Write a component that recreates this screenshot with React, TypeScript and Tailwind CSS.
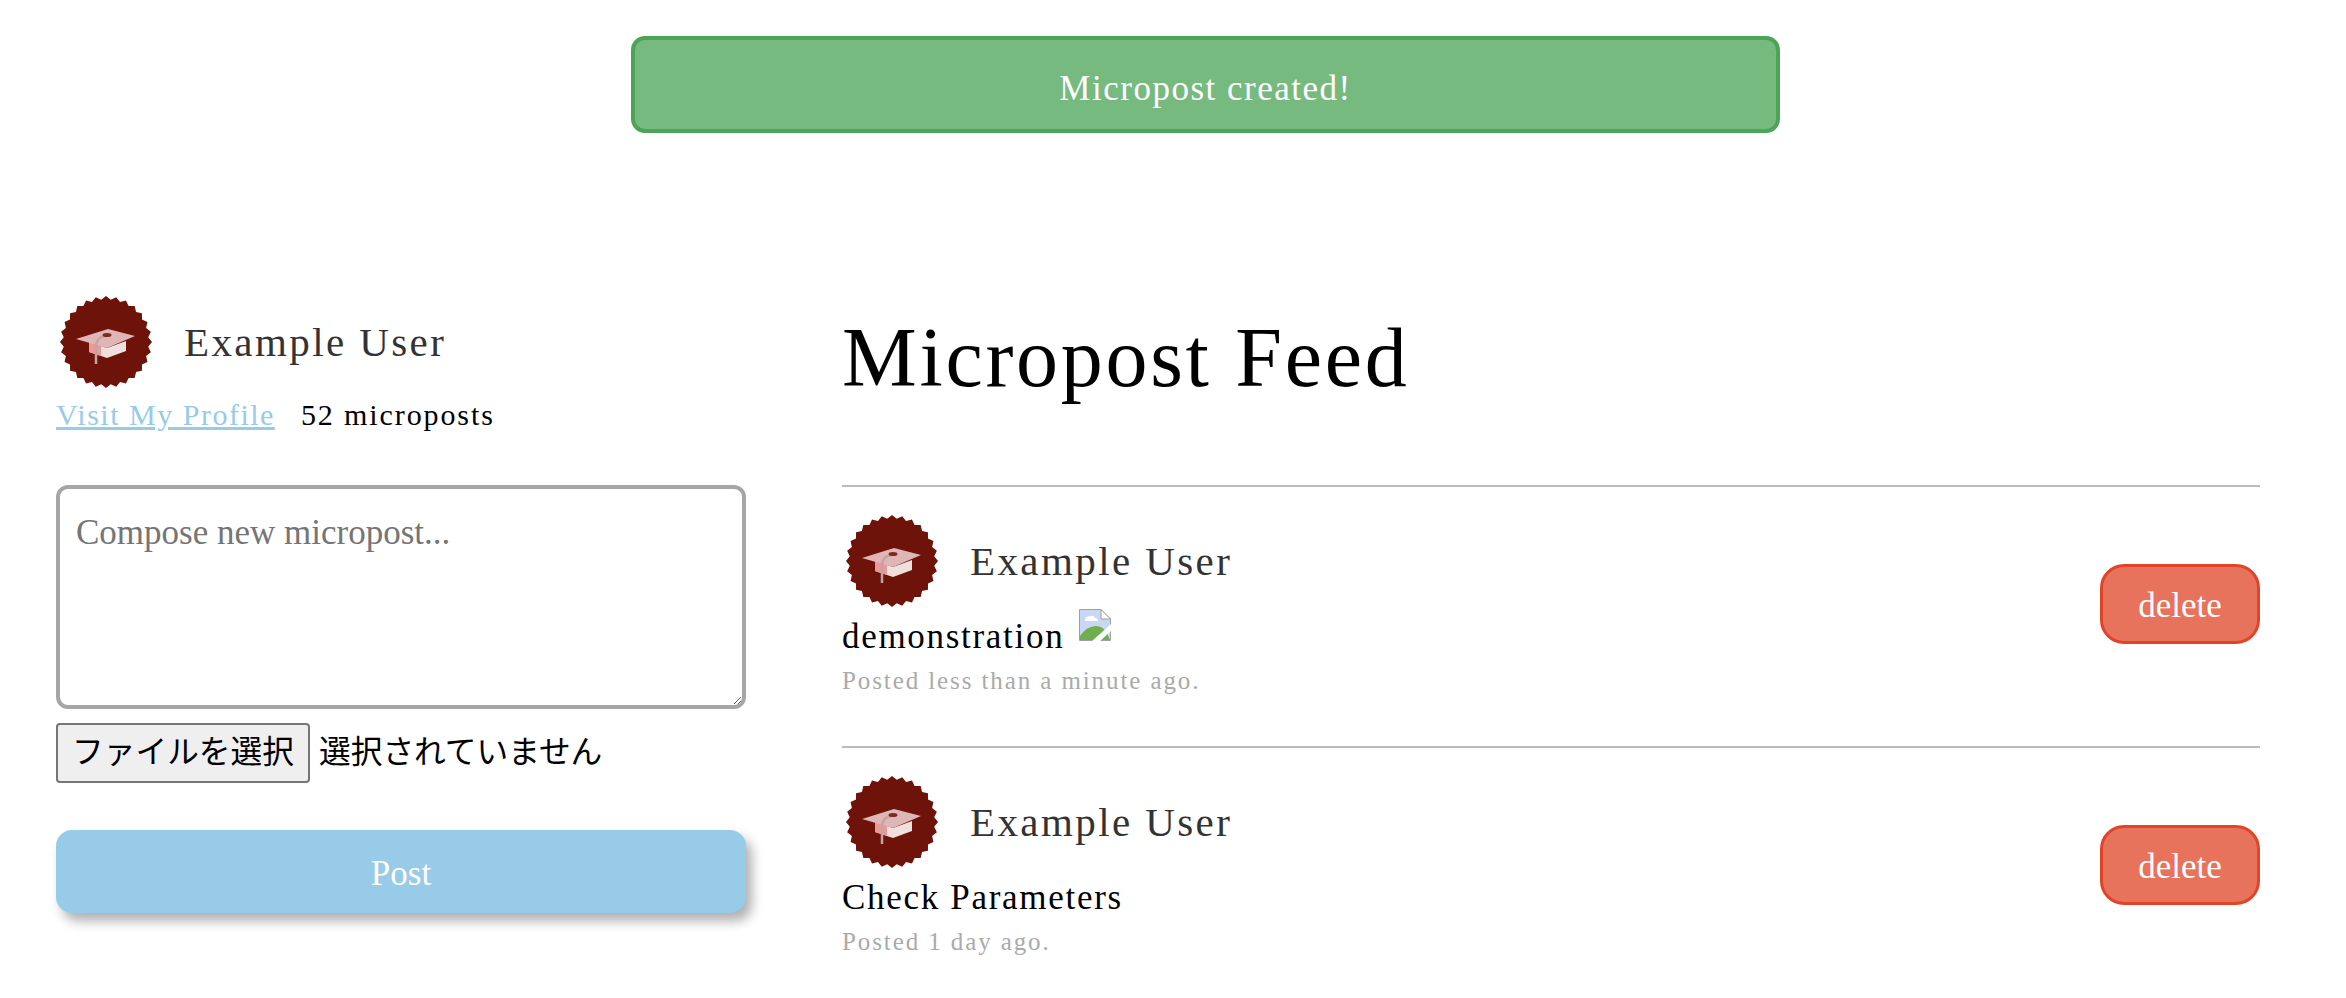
const serif = "font-['Liberation_Serif','Noto_Sans_CJK_JP',serif]"

function badgePoints() {
  const pts: string[] = []
  const count = 28
  for (let i = 0; i < count * 2; i++) {
    const r = i % 2 === 0 ? 46 : 42.5
    const a = (Math.PI * i) / count
    pts.push(`${(46 + r * Math.sin(a)).toFixed(2)},${(46 - r * Math.cos(a)).toFixed(2)}`)
  }
  return pts.join(' ')
}

function Avatar() {
  return (
    <svg width="92" height="92" viewBox="0 0 92 92" className="shrink-0 blur-[0.7px]">
      <polygon points={badgePoints()} fill="#6d1309" />
      <path d="M29 46 L29 56 L47 62 L66 55 L66 45 L47 52 Z" fill="#efe0de" />
      <path d="M29 46 L29 56 L41 60 L41 50 Z" fill="#e89a98" />
      <path d="M16 43 L48 33 L75 40 L47 52 Z" fill="#dfb6b6" />
      <path d="M46 40 C38 41 36 45 36 51 L36 68" fill="none" stroke="#c4a3a0" strokeWidth="2.5" />
      <ellipse cx="47" cy="39" rx="4.5" ry="2" fill="#7d2a20" />
    </svg>
  )
}

function BrokenImage() {
  return (
    <svg width="32" height="32" viewBox="0 0 32 32" className="inline-block align-top">
      <path d="M0.5 0.5 H22 L31.5 10 V31.5 H0.5 Z" fill="#c9d8f2" stroke="#a0a0a0" />
      <path d="M22 0.5 V10 H31.5 Z" fill="#fff" stroke="#a0a0a0" />
      <path d="M6 11 Q7 6.5 11 7.5 Q14 5.5 16 9 Q19 9 19 12 H6 Z" fill="#fff" />
      <path d="M1 31 V27 Q8 17 17 17 Q24 17 28 24 L31 31 Z" fill="#6fae4c" />
      <path d="M12 33 L33 14 V21 L20 33 Z" fill="#fff" />
    </svg>
  )
}

function UserLine() {
  return (
    <div className="flex items-center gap-[32px]">
      <Avatar />
      <span className="pt-[1px] text-[41px] leading-none tracking-[2.4px] text-[#333]">Example User</span>
    </div>
  )
}

function FeedItem({ body, ago, broken }: { body: string; ago: string; broken?: boolean }) {
  return (
    <li className="flex h-[261px] items-center justify-between border-t-2 border-[#bbb] pb-[26px]">
      <div className="pt-[3px]">
        <div className="ml-[4px]">
          <UserLine />
        </div>
        <p className="mt-[3px] flex h-[48px] items-end text-[35px] leading-none tracking-[1.7px] text-black">
          <span className="pb-[4px]">{body}</span>
          {broken && (
            <span className="mb-[14px] ml-[15px]">
              <BrokenImage />
            </span>
          )}
        </p>
        <p className="mt-[8px] text-[25px] leading-[30px] tracking-[1.9px] text-[#aaa]">{ago}</p>
      </div>
      <button className="h-[80px] w-[160px] rounded-[24px] border-[3px] border-[#e0452a] bg-[#e8735c] pt-[6px] text-[35px] text-white">
        delete
      </button>
    </li>
  )
}

export default function App() {
  return (
    <div className={`${serif} h-[998px] overflow-hidden bg-white`}>
      <div className="ml-[631px] mt-[36px] flex h-[97px] w-[1149px] items-center justify-center rounded-[14px] border-[4px] border-[#4ca456] bg-[#76ba80] pt-[10px] text-[35px] tracking-[1.5px] text-white">
        Micropost created!
      </div>

      <div className="mt-[163px] flex pl-[56px] pr-[86px]">
        <aside className="w-[690px] shrink-0">
          <div className="ml-[4px]">
            <UserLine />
          </div>
          <div className="mt-[8px] flex items-baseline gap-[26px] text-[30px] leading-[38px]">
            <a href="#" className="tracking-[1.5px] text-[#98cbe8] underline">
              Visit My Profile
            </a>
            <span className="tracking-[1.9px] text-black">52 microposts</span>
          </div>
          <textarea
            placeholder="Compose new micropost..."
            className="mt-[51px] block h-[224px] w-[690px] rounded-[12px] border-[4px] border-[#a6a6a6] px-[16px] py-[24px] text-[35px] leading-[40px] placeholder:text-[#757575]"
          />
          <div className="mt-[14px] flex items-center gap-[9px] text-[31.7px] text-black">
            <button className="h-[60px] w-[254px] rounded-[4px] border-2 border-[#767676] bg-[#efefef]">
              ファイルを選択
            </button>
            <span>選択されていません</span>
          </div>
          <button className="mt-[47px] h-[83px] w-[690px] rounded-[16px] bg-[#97cbe8] pt-[5px] text-[35px] text-white shadow-[6px_8px_12px_#b0b0b0]">
            Post
          </button>
        </aside>

        <main className="ml-[96px] min-w-0 flex-1">
          <h1 className="mt-[27px] h-[162px] text-[84px] leading-[70px] tracking-[2.7px] text-black">
            Micropost Feed
          </h1>
          <ul>
            <FeedItem body="demonstration" ago="Posted less than a minute ago." broken />
            <FeedItem body="Check Parameters" ago="Posted 1 day ago." />
          </ul>
        </main>
      </div>
    </div>
  )
}
